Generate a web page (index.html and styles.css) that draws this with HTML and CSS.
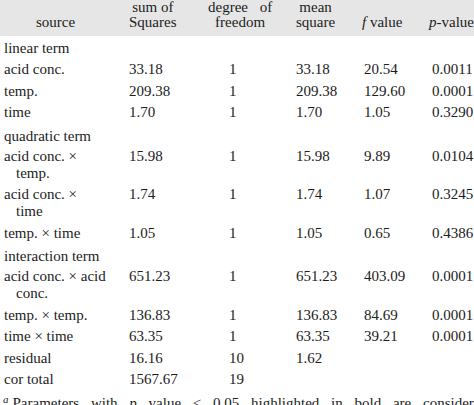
FILE: index.html
```html
<!DOCTYPE html>
<html lang="en">
<head>
<meta charset="utf-8">
<title>ANOVA table</title>
<link rel="stylesheet" href="styles.css">
</head>
<body>
<div class="page">
<table class="anova">
  <colgroup>
    <col class="w1"><col class="w2"><col class="w3"><col class="w4"><col class="w5"><col class="w6">
  </colgroup>
  <thead>
    <tr>
      <th class="h-src"><span class="hb">source</span></th>
      <th class="h-ss"><span class="hb">sum of<br>Squares</span></th>
      <th class="h-df"><span class="hb"><span class="wide">degree of</span><br>freedom</span></th>
      <th class="h-ms"><span class="hb">mean<br>square</span></th>
      <th class="h-f"><span class="hb"><i>f</i> value</span></th>
      <th class="h-p"><span class="hb"><i>p</i>-value</span></th>
    </tr>
  </thead>
  <tbody>
    <tr class="sec first"><td class="src" colspan="6">linear term</td></tr>
    <tr><td class="src">acid conc.</td><td class="ss">33.18</td><td class="df">1</td><td class="ms">33.18</td><td class="fv">20.54</td><td class="pv">0.0011</td></tr>
    <tr><td class="src">temp.</td><td class="ss">209.38</td><td class="df">1</td><td class="ms">209.38</td><td class="fv">129.60</td><td class="pv">0.0001</td></tr>
    <tr><td class="src">time</td><td class="ss">1.70</td><td class="df">1</td><td class="ms">1.70</td><td class="fv">1.05</td><td class="pv">0.3290</td></tr>
    <tr class="sec"><td class="src" colspan="6">quadratic term</td></tr>
    <tr><td class="src">acid conc. ×<br>temp.</td><td class="ss">15.98</td><td class="df">1</td><td class="ms">15.98</td><td class="fv">9.89</td><td class="pv">0.0104</td></tr>
    <tr><td class="src">acid conc. ×<br>time</td><td class="ss">1.74</td><td class="df">1</td><td class="ms">1.74</td><td class="fv">1.07</td><td class="pv">0.3245</td></tr>
    <tr><td class="src">temp. × time</td><td class="ss">1.05</td><td class="df">1</td><td class="ms">1.05</td><td class="fv">0.65</td><td class="pv">0.4386</td></tr>
    <tr class="sec"><td class="src" colspan="6">interaction term</td></tr>
    <tr><td class="src">acid conc. × acid<br>conc.</td><td class="ss">651.23</td><td class="df">1</td><td class="ms">651.23</td><td class="fv">403.09</td><td class="pv">0.0001</td></tr>
    <tr><td class="src">temp. × temp.</td><td class="ss">136.83</td><td class="df">1</td><td class="ms">136.83</td><td class="fv">84.69</td><td class="pv">0.0001</td></tr>
    <tr><td class="src">time × time</td><td class="ss">63.35</td><td class="df">1</td><td class="ms">63.35</td><td class="fv">39.21</td><td class="pv">0.0001</td></tr>
    <tr><td class="src">residual</td><td class="ss">16.16</td><td class="df">10</td><td class="ms">1.62</td><td class="fv"></td><td class="pv"></td></tr>
    <tr><td class="src">cor total</td><td class="ss">1567.67</td><td class="df">19</td><td class="ms"></td><td class="fv"></td><td class="pv"></td></tr>
  </tbody>
</table>
<p class="footnote"><sup class="mark">a</sup>Parameters with <i>p</i> value &lt; 0.05 highlighted in bold are considered significant.</p>
</div>
</body>
</html>
```
FILE: styles.css
```css
html, body {
  margin: 0;
  padding: 0;
  overflow: hidden;
  background: #ffffff;
}

body {
  width: 474px;
  height: 405px;
  font-family: "Liberation Serif", "Times New Roman", serif;
  font-size: 15px;
  color: #1c1c1c;
}

.page {
  width: 474px;
  overflow: hidden;
}

.anova {
  border-collapse: collapse;
  border-spacing: 0;
  table-layout: fixed;
  width: 488px;
  margin: 0;
}

.w1 { width: 120px; }
.w2 { width: 85px; }
.w3 { width: 79px; }
.w4 { width: 66px; }
.w5 { width: 70px; }
.w6 { width: 68px; }

/* header */
.anova thead th {
  background: #e6e6e6;
  font-weight: normal;
  text-align: left;
  vertical-align: bottom;
  line-height: 15px;
  padding: 0 0 6px 0;
  white-space: nowrap;
}

.hb {
  display: inline-block;
  text-align: center;
}

.wide { word-spacing: 8px; }

.anova thead th.h-src { padding-left: 36px; }
.anova thead th.h-ss  { padding-left: 9px; }
.anova thead th.h-df  { padding-left: 3px; }
.anova thead th.h-ms  { padding-left: 12px; }
.anova thead th.h-f   { padding-left: 12px; }
.anova thead th.h-p   { padding-left: 9px; }

/* body */
.anova tbody td {
  vertical-align: top;
  line-height: 17px;
  padding-top: 2px;
  padding-bottom: 2.5px;
  white-space: nowrap;
}

.anova tbody td.src {
  padding-left: 16px;
  padding-right: 4px;
  text-indent: -12px;
}

.anova tbody tr.sec td {
  padding-top: 4px;
  padding-bottom: 1px;
}

.anova tbody tr.sec.first td {
  padding-top: 3.5px;
  padding-bottom: 2.5px;
}

.ss { padding-left: 9px; }
.df { padding-left: 24px; }
.ms { padding-left: 12px; }
.fv { padding-left: 14px; }
.pv { padding-left: 12px; }

/* footnote */
.footnote {
  margin: 4px 0 0 0;
  padding-left: 3px;
  line-height: 17px;
  white-space: nowrap;
  word-spacing: 8px;
}

.mark {
  font-style: italic;
  font-size: 11px;
  line-height: 0;
  vertical-align: 5px;
  margin-right: 4px;
  word-spacing: 0;
}
```
